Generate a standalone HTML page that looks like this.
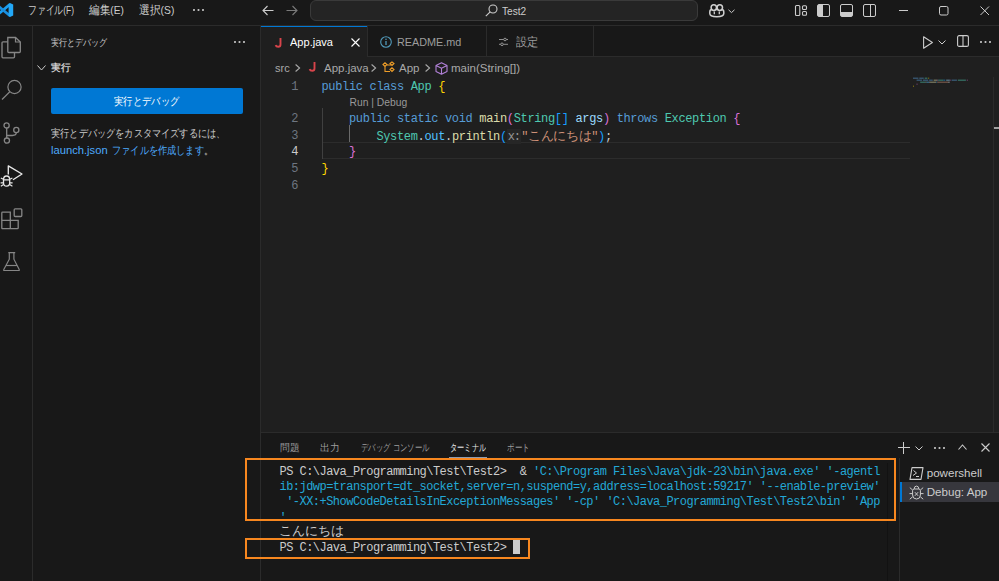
<!DOCTYPE html>
<html><head><meta charset="utf-8">
<style>
*{margin:0;padding:0;box-sizing:border-box}
html,body{width:999px;height:581px;overflow:hidden;background:#181818}
body{position:relative;font-family:"Liberation Sans",sans-serif;color:#cccccc;font-size:12px}
.a{position:absolute}
.t{position:absolute;white-space:pre;line-height:1}
.mono{font-family:"Liberation Mono",monospace}
svg{position:absolute;overflow:visible}
</style></head><body>

<!-- title bar -->
<div class="a" style="left:0;top:0;width:999px;height:25px;background:#181818;border-bottom:1px solid #2b2b2b;height:26px"></div>
<div id="titlebar">
 <svg style="left:0;top:0" width="20" height="26" viewBox="0 0 20 26">
  <path d="M10.2 4.1L-1.5 13.9" stroke="#1b9ef0" stroke-width="2.7" fill="none"/>
  <path d="M10.2 16L-1.5 6.2" stroke="#1a8fe0" stroke-width="2.7" fill="none"/>
  <path d="M8.6 4.2L10 3.1L13.2 4.6V15.6L10 17.1L8.6 16Z" fill="#23a8f7"/>
 </svg>
 <div class="t" id="m1" style="left:28px;top:5px;font-size:11.5px;color:#cccccc;transform:scaleX(0.734);transform-origin:0 0">ファイル(F)</div>
 <div class="t" id="m2" style="left:88.5px;top:5px;font-size:11.5px;color:#cccccc;transform:scaleX(0.885);transform-origin:0 0">編集(E)</div>
 <div class="t" id="m3" style="left:139px;top:5px;font-size:11.5px;color:#cccccc;transform:scaleX(0.9);transform-origin:0 0">選択(S)</div>
 <svg style="left:193px;top:9px" width="12" height="3" viewBox="0 0 12 3"><circle cx="1" cy="1" r="1.05" fill="#cccccc"/><circle cx="5.5" cy="1" r="1.05" fill="#cccccc"/><circle cx="10" cy="1" r="1.05" fill="#cccccc"/></svg>
 <!-- nav arrows -->
 <svg style="left:262px;top:5px" width="12" height="11" viewBox="0 0 12 11"><path d="M11.5 5.5H1M5.5 1L1 5.5L5.5 10" stroke="#cccccc" stroke-width="1.1" fill="none"/></svg>
 <svg style="left:286px;top:5px" width="12" height="11" viewBox="0 0 12 11"><path d="M0.5 5.5H11M6.5 1L11 5.5L6.5 10" stroke="#7a7a7a" stroke-width="1.1" fill="none"/></svg>
 <!-- command center -->
 <div class="a" style="left:310px;top:0px;width:388px;height:21px;background:#242424;border:1px solid #3a3a3a;border-radius:6px"></div>
 <svg style="left:485px;top:4px" width="13" height="13" viewBox="0 0 13 13"><circle cx="8" cy="5" r="4" stroke="#cccccc" stroke-width="1.1" fill="none"/><path d="M5.2 7.8L0.8 12.2" stroke="#cccccc" stroke-width="1.1"/></svg>
 <div class="t" style="left:502px;top:6px;font-size:11.5px;color:#cccccc;transform:scaleX(0.88);transform-origin:0 0">Test2</div>
 <!-- copilot -->
 <svg style="left:709px;top:4px" width="16" height="14" viewBox="0 0 16 14"><path d="M0.8 8Q0.8 5.6 3 5.6H12.6Q14.8 5.6 14.8 8V9.6Q14.8 12.8 7.8 12.8Q0.8 12.8 0.8 9.6Z" stroke="#d0d0d0" stroke-width="1.5" fill="none"/><ellipse cx="4.8" cy="3.6" rx="2.7" ry="2.9" stroke="#d0d0d0" stroke-width="1.5" fill="#181818"/><ellipse cx="10.8" cy="3.6" rx="2.7" ry="2.9" stroke="#d0d0d0" stroke-width="1.5" fill="#181818"/><path d="M5.3 7.5V10.2M10.3 7.5V10.2" stroke="#d0d0d0" stroke-width="1.3"/></svg>
 <svg style="left:727.5px;top:8.5px" width="8" height="5" viewBox="0 0 8 5"><path d="M0.5 0.8L3.5 3.6L6.5 0.8" stroke="#cccccc" stroke-width="1" fill="none"/></svg>
 <!-- layout icons -->
 <svg style="left:795px;top:5px" width="12" height="12" viewBox="0 0 12 12"><rect x="0.5" y="0.5" width="4.3" height="10" rx="1" stroke="#cccccc" stroke-width="1.1" fill="none"/><rect x="7.5" y="0.7" width="4" height="3.8" rx="1" stroke="#cccccc" stroke-width="1.1" fill="none"/><rect x="7.5" y="6.5" width="4" height="3.8" rx="1" stroke="#cccccc" stroke-width="1.1" fill="none"/></svg>
 <svg style="left:817px;top:4px" width="13" height="13" viewBox="0 0 13 13"><rect x="0.5" y="0.5" width="12" height="12" rx="1.5" stroke="#cccccc" fill="none"/><rect x="1" y="1" width="5" height="11" fill="#cccccc"/></svg>
 <svg style="left:840px;top:4px" width="13" height="13" viewBox="0 0 13 13"><rect x="0.5" y="0.5" width="12" height="12" rx="1.5" stroke="#cccccc" fill="none"/><rect x="1" y="8" width="11" height="4" fill="#cccccc"/></svg>
 <svg style="left:863px;top:4px" width="13" height="13" viewBox="0 0 13 13"><rect x="0.5" y="0.5" width="12" height="12" rx="1.5" stroke="#cccccc" fill="none"/><path d="M7.5 1v11" stroke="#cccccc"/></svg>
 <!-- window controls -->
 <svg style="left:899px;top:10px" width="10" height="2" viewBox="0 0 10 2"><path d="M0 0.5H9" stroke="#cccccc" stroke-width="1"/></svg>
 <svg style="left:939px;top:6px" width="10" height="10" viewBox="0 0 10 10"><rect x="0.5" y="0.5" width="8.5" height="8.5" rx="1.5" stroke="#cccccc" fill="none"/></svg>
 <svg style="left:980px;top:6px" width="10" height="10" viewBox="0 0 10 10"><path d="M0.5 0.5L9 9M9 0.5L0.5 9" stroke="#cccccc" stroke-width="1"/></svg>
</div>

<!-- activity bar -->
<div class="a" style="left:32px;top:26px;width:1px;height:555px;background:#2b2b2b"></div>

<!-- sidebar -->
<div class="a" style="left:260px;top:26px;width:1px;height:555px;background:#2b2b2b"></div>

<!-- editor -->
<div class="a" style="left:261px;top:26px;width:738px;height:406px;background:#1f1f1f"></div>
<div class="a" style="left:261px;top:26px;width:738px;height:31px;background:#181818;border-bottom:1px solid #2b2b2b"></div>
<div class="a" style="left:261px;top:26px;width:106px;height:31px;background:#1f1f1f;border-top:1px solid #0078d4"></div>

<!-- panel -->
<div class="a" style="left:261px;top:432px;width:738px;height:1px;background:#2b2b2b"></div>


<!-- activity bar icons -->
<svg style="left:0;top:36px" width="24" height="24" viewBox="0 0 24 24">
 <path d="M7.8 1.5H15.5L20.3 6V15.5Q20.3 16.5 19.3 16.5H8.8Q7.8 16.5 7.8 15.5Z" stroke="#868686" stroke-width="1.35" fill="none"/>
 <path d="M15.5 1.5V6H20.3" stroke="#868686" stroke-width="1.2" fill="none"/>
 <path d="M7.8 5.8H3Q2 5.8 2 6.8V20.8Q2 21.8 3 21.8H13.5Q14.5 21.8 14.5 20.8V16.5" stroke="#868686" stroke-width="1.35" fill="none"/>
</svg>
<svg style="left:0;top:78px" width="24" height="24" viewBox="0 0 24 24">
 <circle cx="14.5" cy="9" r="6.6" stroke="#868686" stroke-width="1.2" fill="none"/>
 <path d="M9.8 13.8L2 21.5" stroke="#868686" stroke-width="1.2"/>
</svg>
<svg style="left:0;top:120px" width="24" height="24" viewBox="0 0 24 24">
 <circle cx="6.6" cy="5.4" r="2.6" stroke="#868686" stroke-width="1.3" fill="none"/>
 <circle cx="6.9" cy="20.6" r="2.6" stroke="#868686" stroke-width="1.3" fill="none"/>
 <circle cx="16.3" cy="10" r="2.6" stroke="#868686" stroke-width="1.3" fill="none"/>
 <path d="M6.7 8V18M16.3 12.6Q16.3 15.5 12.5 15.5H6.7" stroke="#868686" stroke-width="1.3" fill="none"/>
</svg>
<svg style="left:0;top:162px" width="24" height="26" viewBox="0 0 24 26">
 <path d="M8.3 12.6V3.8L22 12L13 17.8" stroke="#e8e8e8" stroke-width="1.35" fill="none" stroke-linejoin="round"/>
 <path d="M3.5 17.8Q3.5 14 6.6 14Q9.7 14 9.7 17.8V20.8Q9.7 24.2 6.6 24.2Q3.5 24.2 3.5 20.8Z" stroke="#e8e8e8" stroke-width="1.3" fill="none"/>
 <path d="M3.5 17.9H9.7M0.8 16L3.4 17.2M12.4 16L9.8 17.2M0.6 20.8H3.4M12.6 20.8H9.8M0.8 24.2L3.5 22.6M12.4 24.2L9.7 22.6" stroke="#e8e8e8" stroke-width="1.15" fill="none"/>
</svg>
<svg style="left:0;top:206px" width="24" height="24" viewBox="0 0 24 24">
 <path d="M2.5 6.2H10.3V14.4H18.2V21.9Q18.2 22.7 17.4 22.7H2.6Q1.8 22.7 1.8 21.9V7Q1.8 6.2 2.5 6.2Z" stroke="#868686" stroke-width="1.3" fill="none"/>
 <path d="M1.8 14.4H10.3V22.7" stroke="#868686" stroke-width="1.3" fill="none"/>
 <rect x="14.2" y="2.9" width="7.6" height="7.6" rx="0.9" stroke="#868686" stroke-width="1.3" fill="none"/>
</svg>
<svg style="left:0;top:250px" width="24" height="24" viewBox="0 0 24 24">
 <path d="M8.3 2.6H15.2M9.3 2.6V9.2L3.8 19.5Q3.2 20.5 4.4 20.5H18.6Q19.8 20.5 19.2 19.5L13.9 9.2V2.6" stroke="#868686" stroke-width="1.2" fill="none"/>
 <path d="M6 15.5H17" stroke="#868686" stroke-width="1.2"/>
</svg>

<!-- sidebar content -->
<div class="t" id="sbTitle" style="left:51px;top:37.5px;font-size:9.5px;color:#cccccc;transform:scaleX(0.8);transform-origin:0 0">実行とデバッグ</div>
<svg style="left:234px;top:41px" width="12" height="3" viewBox="0 0 12 3"><circle cx="1" cy="1" r="1.05" fill="#cccccc"/><circle cx="5.5" cy="1" r="1.05" fill="#cccccc"/><circle cx="10" cy="1" r="1.05" fill="#cccccc"/></svg>
<svg style="left:37.3px;top:65px" width="9" height="6" viewBox="0 0 9 6"><path d="M0.5 0.5L4.5 5L8.5 0.5" stroke="#cccccc" stroke-width="1" fill="none"/></svg>
<div class="t" id="sbRun" style="left:51px;top:63px;font-size:9.5px;font-weight:bold;color:#cccccc;transform:scaleX(0.975);transform-origin:0 0">実行</div>
<div class="a" style="left:51px;top:88px;width:192px;height:26px;background:#0078d4;border-radius:2px"></div>
<div class="t" id="btnTxt" style="left:114px;top:96px;font-size:10.5px;color:#ffffff;transform:scaleX(0.85);transform-origin:0 0">実行とデバッグ</div>
<div class="t" id="desc1" style="left:51px;top:128px;font-size:11px;color:#cccccc;transform:scaleX(0.834);transform-origin:0 0">実行とデバッグをカスタマイズするには、</div>
<div class="t" style="left:51px;top:145px;font-size:10.5px;color:#4daafc"><span id="d2a" style="font-size:11.2px">launch.json</span></div><div class="t" id="d2b" style="left:111.5px;top:145px;font-size:11px;color:#4daafc;transform:scaleX(0.835);transform-origin:0 0">ファイルを作成します<span style="color:#cccccc">。</span></div>

<!-- tabs -->
<div class="a" style="left:367px;top:26px;width:1px;height:30px;background:#2b2b2b"></div>
<div class="a" style="left:486px;top:26px;width:1px;height:30px;background:#2b2b2b"></div>
<div class="a" style="left:593px;top:26px;width:1px;height:30px;background:#2b2b2b"></div>
<svg style="left:275px;top:38px" width="8" height="10" viewBox="0 0 8 10"><path d="M5.5 0V6.5Q5.5 8.8 3.2 8.8Q1.2 8.8 0.6 7.2" stroke="#d8444b" stroke-width="1.9" fill="none"/></svg>
<div class="t" id="tab1" style="left:290px;top:37px;font-size:11.5px;color:#ffffff;transform:scaleX(0.96);transform-origin:0 0">App.java</div>
<svg style="left:351px;top:38px" width="9" height="9" viewBox="0 0 9 9"><path d="M0.5 0.5L8.5 8.5M8.5 0.5L0.5 8.5" stroke="#ffffff" stroke-width="1.1"/></svg>
<svg style="left:380px;top:36px" width="12" height="12" viewBox="0 0 12 12"><circle cx="6" cy="6" r="5.3" stroke="#519aba" stroke-width="1.1" fill="none"/><path d="M6 5V9" stroke="#519aba" stroke-width="1.3"/><circle cx="6" cy="3.3" r="0.8" fill="#519aba"/></svg>
<div class="t" id="tab2" style="left:397px;top:37px;font-size:11.5px;color:#9d9d9d;transform:scaleX(0.94);transform-origin:0 0">README.md</div>
<svg style="left:499px;top:37px" width="10" height="10" viewBox="0 0 10 10"><path d="M0 2.5H4.6M7.4 2.5H9M0 7.3H1.6M4.4 7.3H9" stroke="#9d9d9d" stroke-width="0.9"/><circle cx="6" cy="2.5" r="1.3" fill="none" stroke="#9d9d9d" stroke-width="0.9"/><circle cx="3" cy="7.3" r="1.3" fill="none" stroke="#9d9d9d" stroke-width="0.9"/></svg>
<div class="t" id="tab3" style="left:516px;top:37px;font-size:11.5px;color:#9d9d9d;transform:scaleX(0.94);transform-origin:0 0">設定</div>
<svg style="left:923px;top:36px" width="10" height="13" viewBox="0 0 10 13"><path d="M0.6 0.8V12.2L9.4 6.5Z" stroke="#cccccc" stroke-width="1.1" fill="none" stroke-linejoin="round"/></svg>
<svg style="left:938px;top:40px" width="8" height="5" viewBox="0 0 8 5"><path d="M0.5 0.5L4 4L7.5 0.5" stroke="#cccccc" stroke-width="1" fill="none"/></svg>
<svg style="left:957px;top:35px" width="12" height="12" viewBox="0 0 12 12"><rect x="0.6" y="0.6" width="10.8" height="10.8" rx="1.5" stroke="#cccccc" stroke-width="1.1" fill="none"/><path d="M6 1V11" stroke="#cccccc" stroke-width="1.1"/></svg>
<svg style="left:980px;top:41px" width="12" height="3" viewBox="0 0 12 3"><circle cx="1" cy="1" r="1.05" fill="#cccccc"/><circle cx="5.5" cy="1" r="1.05" fill="#cccccc"/><circle cx="10" cy="1" r="1.05" fill="#cccccc"/></svg>

<!-- breadcrumbs -->
<div class="t" id="bc" style="left:275px;top:62.5px;font-size:11px;color:#a9a9a9">src</div>
<svg style="left:295.0px;top:63.8px" width="6" height="8" viewBox="0 0 6 8"><path d="M0.6 0.5L4.6 4L0.6 7.5" stroke="#a9a9a9" stroke-width="1.1" fill="none"/></svg>
<svg style="left:309px;top:62px" width="8" height="10" viewBox="0 0 8 10"><path d="M5.5 0V6.5Q5.5 8.8 3.2 8.8Q1.2 8.8 0.6 7.2" stroke="#d8444b" stroke-width="1.9" fill="none"/></svg>
<div class="t" id="bc2" style="left:324px;top:62.5px;font-size:11.5px;color:#a9a9a9">App.java</div>
<svg style="left:371.0px;top:63.8px" width="6" height="8" viewBox="0 0 6 8"><path d="M0.6 0.5L4.6 4L0.6 7.5" stroke="#a9a9a9" stroke-width="1.1" fill="none"/></svg>
<svg style="left:382px;top:62px" width="13" height="12" viewBox="0 0 13 12"><path d="M1 2.5L3 0.8L5 2.5L3 4.5Z M3 4.5V9.5H8M5 3H9" stroke="#ee9d28" stroke-width="1.1" fill="none"/><path d="M8 7.5L10 5.8L12 7.5L10 9.5Z M8 1.5L10 0L12 1.5L10 3.5Z" stroke="#ee9d28" stroke-width="1.1" fill="none"/></svg>
<div class="t" id="bc3" style="left:399px;top:62.5px;font-size:11.5px;color:#a9a9a9">App</div>
<svg style="left:425.0px;top:63.8px" width="6" height="8" viewBox="0 0 6 8"><path d="M0.6 0.5L4.6 4L0.6 7.5" stroke="#a9a9a9" stroke-width="1.1" fill="none"/></svg>
<svg style="left:435px;top:62px" width="13" height="13" viewBox="0 0 13 13"><path d="M6.5 0.7L12 3.5V9.5L6.5 12.3L1 9.5V3.5Z M1 3.5L6.5 6.3L12 3.5 M6.5 6.3V12.3" stroke="#b180d7" stroke-width="1.1" fill="none" stroke-linejoin="round"/></svg>
<div class="t" id="bc4" style="left:451px;top:62.5px;font-size:11.5px;color:#a9a9a9">main(String[])</div>

<!-- minimap & scrollbar -->
<div class="a" style="left:993px;top:77px;width:1px;height:355px;background:#2a2a2a"></div>
<div class="a" style="left:994px;top:127px;width:5px;height:2px;background:#a0a0a0"></div>


<!-- editor code -->
<style>
.ln{position:absolute;left:269.2px;width:29px;text-align:right;font-family:"Liberation Mono",monospace;font-size:12px;line-height:17px;color:#6e7681;white-space:pre;letter-spacing:-0.34px}
.cl{position:absolute;left:321.5px;font-family:"Liberation Mono",monospace;font-size:12px;line-height:17px;color:#cccccc;white-space:pre;letter-spacing:-0.34px}
.kw{color:#569cd6}.ty{color:#4ec9b0}.fn{color:#dcdcaa}.pa{color:#9cdcfe}.fd{color:#4fc1ff}.st{color:#ce9178}
.b1{color:#ffd700}.b2{color:#da70d6}.b3{color:#179fff}.op{color:#d4d4d4}
</style>
<div class="a" style="left:322px;top:142px;width:588px;height:17px;border-top:1px solid #2c2c2c;border-bottom:1px solid #2c2c2c"></div>
<div class="a" style="left:322px;top:108px;width:1px;height:51px;background:#404040"></div>
<div class="a" style="left:349px;top:125px;width:1px;height:17px;background:#6a6a6a"></div>
<div class="ln" style="top:79px">1</div>
<div class="ln" style="top:111px">2</div>
<div class="ln" style="top:128px">3</div>
<div class="ln" style="top:144px;color:#cccccc">4</div>
<div class="ln" style="top:161px">5</div>
<div class="ln" style="top:178px">6</div>
<div class="cl" style="top:79px"><span class="kw">public class </span><span class="ty">App </span><span class="b1">{</span></div>
<div class="t" id="lens" style="left:349.5px;top:98px;font-size:10.3px;color:#999999">Run | Debug</div>
<div class="cl" style="top:111px">    <span class="kw">public static void </span><span class="fn">main</span><span class="b2">(</span><span class="ty">String</span><span class="b3">[]</span> <span class="pa">args</span><span class="b2">)</span> <span class="kw">throws </span><span class="ty">Exception </span><span class="b2">{</span></div>
<div class="cl" style="top:128px">        <span class="ty">System</span>.<span class="fd">out</span>.<span class="fn">println</span><span class="b3">(</span><span style="display:inline-block;width:14.5px;height:15px;vertical-align:top;margin-top:1px;background:#262626;color:#969696;padding-left:1px;letter-spacing:-1.2px">x:</span><span class="st">"</span><span class="st" id="kon" style="font-size:13px;letter-spacing:-0.4px">こんにちは</span><span class="st">"</span><span class="b3">)</span>;</div>
<div class="cl" style="top:144px">    <span class="b2">}</span></div>
<div class="cl" style="top:161px"><span class="b1">}</span></div>

<!-- minimap -->
<svg style="left:913px;top:77px" width="56" height="10" viewBox="0 0 56 10" opacity="0.5"><rect x="0.00" y="0.6" width="5.38" height="1.2" fill="#569cd6"/><rect x="6.28" y="0.6" width="4.48" height="1.2" fill="#569cd6"/><rect x="11.66" y="0.6" width="2.69" height="1.2" fill="#4ec9b0"/><rect x="15.24" y="0.6" width="0.90" height="1.2" fill="#ffd700"/><rect x="3.59" y="2.6" width="5.38" height="1.2" fill="#569cd6"/><rect x="9.86" y="2.6" width="5.38" height="1.2" fill="#569cd6"/><rect x="16.14" y="2.6" width="3.59" height="1.2" fill="#569cd6"/><rect x="20.62" y="2.6" width="3.59" height="1.2" fill="#dcdcaa"/><rect x="24.21" y="2.6" width="0.90" height="1.2" fill="#da70d6"/><rect x="25.11" y="2.6" width="5.38" height="1.2" fill="#4ec9b0"/><rect x="30.49" y="2.6" width="1.79" height="1.2" fill="#179fff"/><rect x="33.18" y="2.6" width="3.59" height="1.2" fill="#9cdcfe"/><rect x="36.77" y="2.6" width="0.90" height="1.2" fill="#da70d6"/><rect x="38.56" y="2.6" width="5.38" height="1.2" fill="#569cd6"/><rect x="44.84" y="2.6" width="8.07" height="1.2" fill="#4ec9b0"/><rect x="53.80" y="2.6" width="0.90" height="1.2" fill="#da70d6"/><rect x="7.17" y="4.6" width="5.38" height="1.2" fill="#4ec9b0"/><rect x="12.55" y="4.6" width="0.90" height="1.2" fill="#cccccc"/><rect x="13.45" y="4.6" width="2.69" height="1.2" fill="#4fc1ff"/><rect x="16.14" y="4.6" width="0.90" height="1.2" fill="#cccccc"/><rect x="17.04" y="4.6" width="6.28" height="1.2" fill="#dcdcaa"/><rect x="23.31" y="4.6" width="0.90" height="1.2" fill="#179fff"/><rect x="24.21" y="4.6" width="10.76" height="1.2" fill="#ce9178"/><rect x="34.97" y="4.6" width="1.79" height="1.2" fill="#cccccc"/><rect x="3.59" y="6.6" width="0.90" height="1.2" fill="#da70d6"/><rect x="0.00" y="8.6" width="0.90" height="1.2" fill="#ffd700"/></svg>

<!-- panel -->
<div class="t" id="p1" style="left:279.5px;top:443px;font-size:9.5px;color:#9d9d9d;transform:scaleX(0.975);transform-origin:0 0">問題</div>
<div class="t" id="p2" style="left:320px;top:443px;font-size:9.5px;color:#9d9d9d;transform:scaleX(0.975);transform-origin:0 0">出力</div>
<div class="t" id="p3" style="left:360.5px;top:443px;font-size:9.5px;color:#9d9d9d;transform:scaleX(0.74);transform-origin:0 0">デバッグ コンソール</div>
<div class="t" id="p4" style="left:449.7px;top:443px;font-size:9.5px;color:#e7e7e7;transform:scaleX(0.72);transform-origin:0 0">ターミナル</div>
<div class="t" id="p5" style="left:506.5px;top:443px;font-size:9.5px;color:#9d9d9d;transform:scaleX(0.75);transform-origin:0 0">ポート</div>
<div class="a" style="left:448.5px;top:456.6px;width:38.5px;height:1.2px;background:#8d9bb0"></div>
<svg style="left:898px;top:442px" width="12" height="12" viewBox="0 0 12 12"><path d="M5.5 0V12M0 5.5H12" stroke="#cccccc" stroke-width="1"/></svg>
<svg style="left:915px;top:446px" width="8" height="5" viewBox="0 0 8 5"><path d="M0.5 0.5L4 4L7.5 0.5" stroke="#cccccc" stroke-width="1" fill="none"/></svg>
<svg style="left:934px;top:447px" width="12" height="3" viewBox="0 0 12 3"><circle cx="1" cy="1" r="1.05" fill="#cccccc"/><circle cx="5.5" cy="1" r="1.05" fill="#cccccc"/><circle cx="10" cy="1" r="1.05" fill="#cccccc"/></svg>
<svg style="left:958px;top:444px" width="9" height="6" viewBox="0 0 9 6"><path d="M0.5 5.5L4.5 1L8.5 5.5" stroke="#cccccc" stroke-width="1.1" fill="none"/></svg>
<svg style="left:981px;top:443px" width="9" height="9" viewBox="0 0 9 9"><path d="M0.5 0.5L8.5 8.5M8.5 0.5L0.5 8.5" stroke="#cccccc" stroke-width="1.1"/></svg>

<style>
.tl{position:absolute;left:279.5px;font-family:"Liberation Mono",monospace;font-size:12px;line-height:15.2px;color:#cccccc;white-space:pre;letter-spacing:-0.53px}
.cy{color:#23a8d6}
</style>
<div class="tl" style="top:465px">PS C:\Java_Programming\Test\Test2>  &amp; <span class="cy">'C:\Program Files\Java\jdk-23\bin\java.exe' '-agentl</span></div>
<div class="tl cy" style="top:480.2px">ib:jdwp=transport=dt_socket,server=n,suspend=y,address=localhost:59217' '--enable-preview'</div>
<div class="tl cy" style="top:495.4px"> '-XX:+ShowCodeDetailsInExceptionMessages' '-cp' 'C:\Java_Programming\Test\Test2\bin' 'App</div>
<div class="tl cy" style="top:510.6px">'</div>
<div class="tl" id="tkon" style="left:278.7px;top:523.8px;font-size:13px;letter-spacing:0">こんにちは</div>
<div class="tl" style="top:541px">PS C:\Java_Programming\Test\Test2> </div>
<div class="a" style="left:513px;top:540px;width:7px;height:14px;background:#cccccc"></div>

<div class="a" style="left:887px;top:463px;width:1px;height:118px;background:#121212"></div>
<!-- orange boxes -->
<div class="a" style="left:244.5px;top:457.6px;width:651px;height:63.4px;border:2.3px solid #f7871f"></div>
<div class="a" style="left:244.5px;top:537.8px;width:285.5px;height:21px;border:2.3px solid #f7871f"></div>

<!-- terminal tabs -->
<div class="a" style="left:899px;top:458px;width:1px;height:123px;background:#2b2b2b"></div>
<div class="a" style="left:900px;top:482.3px;width:99px;height:19.7px;background:#37373d"></div>
<div class="a" style="left:900px;top:482.3px;width:2px;height:19.7px;background:#0078d4"></div>
<svg style="left:909px;top:467px" width="15" height="13" viewBox="0 0 15 13"><path d="M3 0.6H14L12 12.4H1Z" stroke="#cccccc" stroke-width="1.1" fill="none" stroke-linejoin="round"/><path d="M4.5 3.5L7.5 6L4 8.5M7 9.5H10" stroke="#cccccc" stroke-width="1" fill="none"/></svg>
<div class="t" id="ps" style="left:926.7px;top:467px;font-size:11.6px;color:#cccccc">powershell</div>
<svg style="left:909px;top:485px" width="15" height="15" viewBox="0 0 15 15"><path d="M5.2 4Q5.2 1.1 7.5 1.1Q9.8 1.1 9.8 4" stroke="#cccccc" stroke-width="1" fill="none"/><path d="M3.6 5.6Q3.6 4 5.4 4H9.6Q11.4 4 11.4 5.6V10Q11.4 14 7.5 14Q3.6 14 3.6 10Z" stroke="#cccccc" stroke-width="1" fill="none"/><path d="M5.9 7.2L9.1 10.8M9.1 7.2L5.9 10.8M0.8 2.6L3.6 5M14.2 2.6L11.4 5M0.5 8.6H3.6M11.4 8.6H14.5M0.8 14.2L3.6 11.8M14.2 14.2L11.4 11.8" stroke="#cccccc" stroke-width="1" fill="none"/></svg>
<div class="t" id="dbg" style="left:926.7px;top:486px;font-size:11.6px;color:#cccccc">Debug: App</div>

</body></html>
